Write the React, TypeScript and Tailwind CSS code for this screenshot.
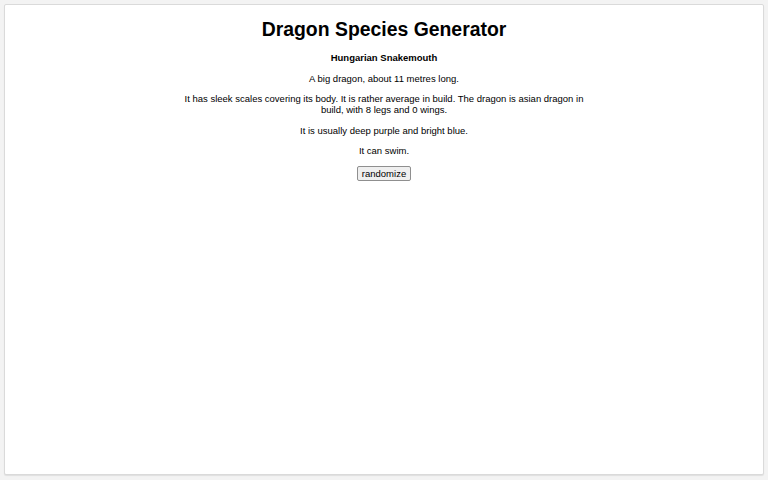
import React, { useState } from 'react';

type Dragon = {
  name: string;
  size: string;
  build: string;
  colours: string;
  ability: string;
};

const initial: Dragon = {
  name: 'Hungarian Snakemouth',
  size: 'A big dragon, about 11 metres long.',
  build:
    'It has sleek scales covering its body. It is rather average in build. The dragon is asian dragon in build, with 8 legs and 0 wings.',
  colours: 'It is usually deep purple and bright blue.',
  ability: 'It can swim.',
};

export default function App() {
  const [dragon] = useState<Dragon>(initial);

  return (
    <div className="min-h-screen bg-[#f3f3f3] p-[4px] font-['Liberation_Sans',Arial,sans-serif] text-black">
      <div className="h-[471px] bg-white border border-[#dadada] rounded-[2px] shadow-[0_1px_1px_rgba(0,0,0,0.08)] flex flex-col items-center">
        <h1 className="mt-[13px] text-[19.4px] leading-[23px] font-bold">Dragon Species Generator</h1>

        <div className="w-[406px] mt-[11px] text-center text-[9.5px] leading-[11px] flex flex-col items-center gap-[9.5px]">
          <p className="font-bold">{dragon.name}</p>
          <p>{dragon.size}</p>
          <p>{dragon.build}</p>
          <p>{dragon.colours}</p>
          <p>{dragon.ability}</p>
          <button className="px-[4px] h-[15px] text-[9.5px] leading-[13px] bg-[#efefef] border border-[#8f8f8f] rounded-[2px]">
            randomize
          </button>
        </div>
      </div>
    </div>
  );
}
